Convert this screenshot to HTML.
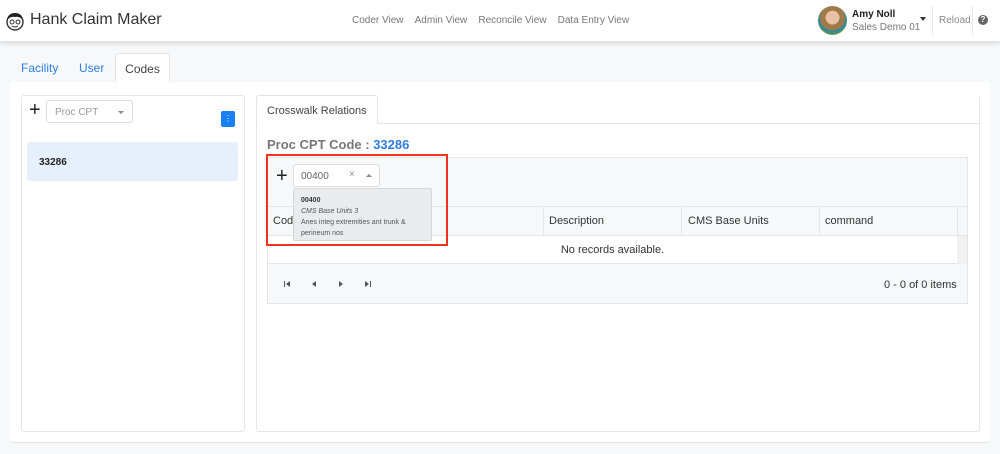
<!DOCTYPE html>
<html><head><style>
*{box-sizing:border-box;margin:0;padding:0}
body{width:1000px;height:454px;background:#f7f8fa;font-family:"Liberation Sans",sans-serif;position:relative;overflow:hidden;color:#333}
.a{position:absolute}
</style></head><body>
<div class="a" style="left:0;top:0;width:1000px;height:41px;background:#fff;box-shadow:0 2px 6px rgba(0,0,0,.15)"></div>
<svg class="a" style="left:5px;top:11px" width="20" height="20" viewBox="0 0 20 20"><circle cx="10" cy="11" r="8" fill="#fff" stroke="#333" stroke-width="1.4"/><path d="M2 9 Q3 2 10 2 Q17 2 18 9 Q14 5 10 6 Q6 5 2 9Z" fill="#222"/><circle cx="7" cy="11" r="2" fill="none" stroke="#333"/><circle cx="13" cy="11" r="2" fill="none" stroke="#333"/><path d="M7 15 Q10 17 13 15" stroke="#333" fill="none"/></svg>
<div class="a" style="left:30px;top:11px;font-size:16px;color:#333">Hank Claim Maker</div>
<div class="a" style="left:352px;top:15px;font-size:10px;color:#777;word-spacing:0">Coder View&nbsp;&nbsp;&nbsp;&nbsp;Admin View&nbsp;&nbsp;&nbsp;&nbsp;Reconcile View&nbsp;&nbsp;&nbsp;&nbsp;Data Entry View</div>
<div class="a" style="left:818px;top:6px;width:29px;height:29px;border-radius:50%;background:radial-gradient(circle at 50% 40%,#e8c2a4 0 30%,#a07a4a 31% 55%,#3a8a8a 56% 70%,#6a9a5a 71%)"></div>
<div class="a" style="left:852px;top:9px;font-size:10px;font-weight:bold;color:#222">Amy Noll</div>
<div class="a" style="left:852px;top:22px;font-size:10px;color:#777">Sales Demo 01</div>
<div class="a" style="left:920px;top:17px;border-left:3px solid transparent;border-right:3px solid transparent;border-top:4px solid #333"></div>
<div class="a" style="left:932px;top:6px;height:29px;border-left:1px solid #e5e5e5"></div>
<div class="a" style="left:939px;top:15px;font-size:10px;color:#888">Reload</div>
<div class="a" style="left:972px;top:6px;height:29px;border-left:1px solid #e5e5e5"></div>
<div class="a" style="left:978px;top:15px;width:10px;height:10px;border-radius:50%;background:#666;color:#fff;font-size:8px;font-weight:bold;text-align:center;line-height:10px">?</div>

<div class="a" style="left:21px;top:61px;font-size:12px;color:#2f7de1">Facility</div>
<div class="a" style="left:79px;top:61px;font-size:12px;color:#2f7de1">User</div>
<div class="a" style="left:115px;top:53px;width:55px;height:30px;background:#fff;border:1px solid #e3e3e3;border-bottom:none;border-radius:3px 3px 0 0;font-size:12px;text-align:center;padding-top:8px;color:#444">Codes</div>
<div class="a" style="left:10px;top:82px;width:980px;height:361px;background:#fff;border-bottom:1px solid #e3e3e3;border-radius:0 0 3px 3px"></div>

<div class="a" style="left:21px;top:95px;width:224px;height:337px;border:1px solid #e6e6e6;border-radius:3px"></div>
<div class="a" style="left:29px;top:99px;font-size:20px;color:#222">+</div>
<div class="a" style="left:46px;top:100px;width:87px;height:23px;border:1px solid #ddd;border-radius:3px;font-size:10px;color:#999;padding:6px 8px">Proc CPT</div>
<div class="a" style="left:118px;top:111px;border-left:3px solid transparent;border-right:3px solid transparent;border-top:3px solid #888"></div>
<div class="a" style="left:221px;top:111px;width:14px;height:16px;background:#1a7ff0;border-radius:2px;color:#fff;font-size:8px;text-align:center;line-height:16px">⋮</div>
<div class="a" style="left:27px;top:142px;width:211px;height:39px;background:#e6f0fd;border-radius:3px;font-size:10px;font-weight:bold;padding:15px 12px;color:#222">33286</div>

<div class="a" style="left:256px;top:95px;width:724px;height:337px;border:1px solid #e6e6e6;border-top:none;border-radius:3px"></div>
<div class="a" style="left:256px;top:123px;width:724px;border-top:1px solid #e3e3e3"></div>
<div class="a" style="left:256px;top:95px;width:122px;height:29px;background:#fff;border:1px solid #e3e3e3;border-bottom:none;border-radius:3px 3px 0 0;font-size:11px;padding:9px 10px;color:#444">Crosswalk Relations</div>
<div class="a" style="left:267px;top:137px;font-size:13px;font-weight:bold;color:#777">Proc CPT Code : <span style="color:#2f7de1">33286</span></div>

<div class="a" style="left:267px;top:157px;width:701px;height:147px;border:1px solid #e6e6e6;background:#f7f8fa"></div>
<div class="a" style="left:268px;top:206px;width:699px;height:30px;border-top:1px solid #e6e6e6;border-bottom:1px solid #e6e6e6"></div>
<div class="a" style="left:268px;top:236px;width:689px;height:28px;background:#fff;border-bottom:1px solid #e6e6e6;font-size:11px;text-align:center;padding-top:8px;color:#333">No records available.</div>
<div class="a" style="left:957px;top:236px;width:10px;height:28px;background:#f1f1f1"></div>
<div class="a" style="left:273px;top:215px;font-size:11px;color:#333">Code</div>
<div class="a" style="left:543px;top:206px;height:30px;border-left:1px solid #e6e6e6"></div>
<div class="a" style="left:549px;top:215px;font-size:11px;color:#333">Description</div>
<div class="a" style="left:681px;top:206px;height:30px;border-left:1px solid #e6e6e6"></div>
<div class="a" style="left:688px;top:215px;font-size:11px;color:#333">CMS Base Units</div>
<div class="a" style="left:819px;top:206px;height:30px;border-left:1px solid #e6e6e6"></div>
<div class="a" style="left:825px;top:215px;font-size:11px;color:#333">command</div>
<div class="a" style="left:957px;top:206px;height:30px;border-left:1px solid #e6e6e6"></div>
<svg class="a" style="left:283px;top:280px" width="90" height="8" viewBox="0 0 90 8" fill="#555"><rect x="1" y="1" width="1" height="6"/><path d="M7 1 L3 4 L7 7Z"/><path d="M33 1 L29 4 L33 7Z"/><path d="M56 1 L60 4 L56 7Z"/><path d="M82 1 L86 4 L82 7Z"/><rect x="87" y="1" width="1" height="6"/></svg>
<div class="a" style="left:884px;top:279px;font-size:11px;color:#333">0 - 0 of 0 items</div>

<div class="a" style="left:276px;top:165px;font-size:20px;color:#222">+</div>
<div class="a" style="left:293px;top:164px;width:87px;height:23px;border:1px solid #ddd;border-radius:3px;background:#fff;font-size:10px;color:#666;padding:6px 7px">00400</div>
<div class="a" style="left:349px;top:169px;font-size:10px;color:#888">×</div>
<div class="a" style="left:366px;top:174px;border-left:3px solid transparent;border-right:3px solid transparent;border-bottom:3px solid #888"></div>
<div class="a" style="left:293px;top:188px;width:139px;height:53px;background:#e9ebee;border:1px solid #d8d8d8;border-radius:2px;font-size:7px;color:#555;padding:6px 7px;line-height:11px"><b style="color:#333">00400</b><br><i>CMS Base Units 3</i><br>Anes integ extremities ant trunk &amp; perineum nos</div>
<div class="a" style="left:266px;top:154px;width:182px;height:92px;border:2px solid #f0341c"></div>
</body></html>
